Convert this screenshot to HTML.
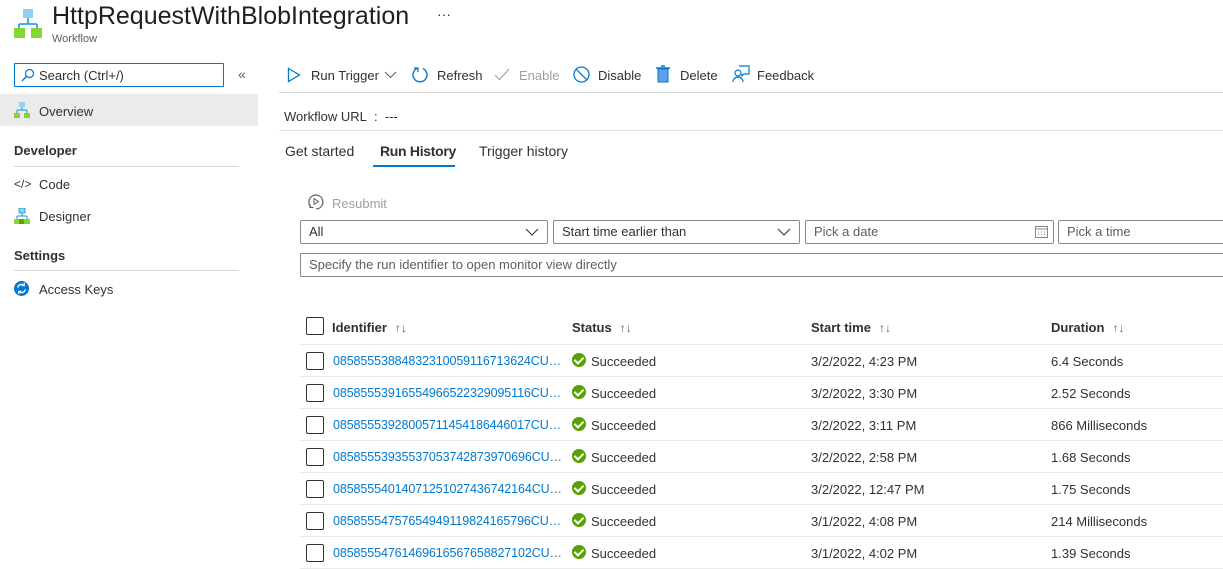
<!DOCTYPE html>
<html><head><meta charset="utf-8"><style>
*{box-sizing:border-box;margin:0;padding:0}
body{width:1223px;height:564px;overflow:hidden;background:#fff;font-family:"Liberation Sans",sans-serif;font-size:13px;color:#323130;position:relative}
.a{position:absolute;white-space:nowrap}
.line{position:absolute;height:1px;background:#d6d6d6}
.box{position:absolute;border:1px solid #8a8886;border-radius:2px;height:24px;line-height:22px;padding-left:8px;color:#323130}
.cb{position:absolute;width:18px;height:18px;border:1px solid #323130;border-radius:2px;left:306px}
.link{color:#0078d4;font-size:12.5px;letter-spacing:-0.1px}
.ok{position:absolute;left:572px;width:14px;height:14px;border-radius:50%;background:#57a300}
.ok:after{content:"";position:absolute;left:4px;top:2px;width:4px;height:7px;border:solid #fff;border-width:0 2px 2px 0;transform:rotate(45deg)}
.hd{font-weight:bold;color:#323130}
.sort{color:#605e5c;font-weight:normal;margin-left:8px;font-size:12px}
</style></head><body>
<svg class="a" style="left:14px;top:9px" width="28" height="30" viewBox="0 0 28 30"><rect x="9" y="0" width="10" height="9" fill="#8fd0f5"/><path d="M14 9v6M5 15h18M5 15v4M23 15v4" stroke="#1490df" stroke-width="1.5" fill="none"/><rect x="0" y="19" width="11" height="10" fill="#86d633"/><rect x="17" y="19" width="11" height="10" fill="#86d633"/></svg>
<div class="a" style="left:52px;top:2px;font-size:25px;color:#201f1e">HttpRequestWithBlobIntegration</div>
<div class="a" style="left:437px;top:6px;font-size:14px">···</div>
<div class="a" style="left:52px;top:33px;font-size:11px;color:#605e5c">Workflow</div>

<div class="a" style="left:14px;top:63px;width:210px;height:24px;border:1px solid #0078d4;border-radius:1px"></div>
<svg class="a" style="left:21px;top:68px" width="14" height="14" viewBox="0 0 14 14"><circle cx="8.5" cy="5.5" r="4" fill="none" stroke="#0078d4" stroke-width="1.2"/><path d="M5.5 8.5L1 13" stroke="#0078d4" stroke-width="1.3"/></svg>
<div class="a" style="left:39px;top:68px;color:#323130">Search (Ctrl+/)</div>
<div class="a" style="left:238px;top:66px;color:#605e5c;font-size:14px">«</div>
<div class="a" style="left:0;top:94px;width:258px;height:32px;background:#edebe9"></div>
<svg class="a" style="left:14px;top:102px" width="16" height="16" viewBox="0 0 16 16"><rect x="5" y="0" width="6" height="5" fill="#8fd0f5"/><path d="M8 5v3M3 8h10M3 8v3M13 8v3" stroke="#1490df" stroke-width="1" fill="none"/><rect x="0" y="11" width="6" height="5" fill="#86d633"/><rect x="10" y="11" width="6" height="5" fill="#86d633"/></svg>
<div class="a" style="left:39px;top:104px">Overview</div>
<div class="a" style="left:14px;top:143px;font-weight:bold">Developer</div>
<div class="line" style="left:14px;top:166px;width:225px"></div>
<div class="a" style="left:14px;top:177px;font-size:12px">&lt;/&gt;</div>
<div class="a" style="left:39px;top:177px">Code</div>
<svg class="a" style="left:14px;top:208px" width="16" height="16" viewBox="0 0 16 16"><rect x="5" y="0" width="6" height="5" fill="#8fd0f5" stroke="#1490df" stroke-width=".8"/><path d="M8 5v3M3 8h10M3 8v3M13 8v3" stroke="#1490df" stroke-width="1" fill="none"/><rect x="0" y="11" width="6" height="5" fill="#86d633"/><rect x="5" y="11" width="6" height="5" fill="#5ea000"/><rect x="10" y="11" width="6" height="5" fill="#86d633"/></svg>
<div class="a" style="left:39px;top:209px">Designer</div>
<div class="a" style="left:14px;top:248px;font-weight:bold">Settings</div>
<div class="line" style="left:14px;top:270px;width:225px"></div>
<svg class="a" style="left:14px;top:281px" width="15" height="15" viewBox="0 0 16 16"><circle cx="8" cy="8" r="8" fill="#0078d4"/><path d="M4 7a4 4 0 0 1 7-2M12 9a4 4 0 0 1-7 2" stroke="#fff" stroke-width="1.5" fill="none"/><path d="M11 2v3h-3M5 14v-3h3" stroke="#fff" stroke-width="1.3" fill="none"/></svg>
<div class="a" style="left:39px;top:282px">Access Keys</div>

<svg class="a" style="left:287px;top:67px" width="14" height="16" viewBox="0 0 14 16"><path d="M1.5 1.5L12.5 8 1.5 14.5Z" fill="none" stroke="#0078d4" stroke-width="1.3"/></svg>
<div class="a" style="left:311px;top:68px">Run Trigger</div>
<svg class="a" style="left:384px;top:71px" width="13" height="8" viewBox="0 0 13 8"><path d="M1 1l5.5 5.5L12 1" stroke="#605e5c" fill="none"/></svg>
<svg class="a" style="left:411px;top:66px" width="18" height="18" viewBox="0 0 18 18"><path d="M6 2.5A7 7 0 1 0 12 2.5" stroke="#0078d4" stroke-width="1.4" fill="none"/><path d="M3 2h4v4" stroke="#0078d4" stroke-width="1.3" fill="none"/></svg>
<div class="a" style="left:437px;top:68px">Refresh</div>
<svg class="a" style="left:494px;top:68px" width="16" height="13" viewBox="0 0 16 13"><path d="M1 7l4.5 4.5L15 1" stroke="#a19f9d" fill="none" stroke-width="1.1"/></svg>
<div class="a" style="left:519px;top:68px;color:#a19f9d">Enable</div>
<svg class="a" style="left:573px;top:66px" width="17" height="17" viewBox="0 0 17 17"><circle cx="8.5" cy="8.5" r="7.5" stroke="#0078d4" stroke-width="1.3" fill="none"/><path d="M3.3 3.3l10.4 10.4" stroke="#0078d4" stroke-width="1.3"/></svg>
<div class="a" style="left:598px;top:68px">Disable</div>
<svg class="a" style="left:656px;top:65px" width="14" height="18" viewBox="0 0 14 18"><path d="M0 3h14M5 1h4" stroke="#0078d4" stroke-width="1.4"/><rect x="2" y="4" width="10" height="13" fill="#5ea0ef" stroke="#0078d4"/></svg>
<div class="a" style="left:680px;top:68px">Delete</div>
<svg class="a" style="left:732px;top:65px" width="18" height="18" viewBox="0 0 18 18"><circle cx="6" cy="8" r="3" stroke="#0078d4" fill="none" stroke-width="1.2"/><path d="M1 17a5 5 0 0 1 10 0" stroke="#0078d4" fill="none" stroke-width="1.2"/><path d="M7 1h10v8h-5l-2 2v-2" stroke="#0078d4" fill="none" stroke-width="1.2"/></svg>
<div class="a" style="left:757px;top:68px">Feedback</div>
<div class="line" style="left:279px;top:92px;width:944px"></div>
<div class="a" style="left:284px;top:109px">Workflow URL&nbsp; :&nbsp; ---</div>
<div class="line" style="left:279px;top:130px;width:944px;background:#e1dfdd"></div>
<div class="a" style="left:285px;top:143px;font-size:14px">Get started</div>
<div class="a" style="left:380px;top:143px;font-size:14px;font-weight:bold;color:#323130;letter-spacing:-0.3px">Run History</div>
<div class="a" style="left:373px;top:165px;width:82px;height:2px;background:#0078d4"></div>
<div class="a" style="left:479px;top:143px;font-size:14px">Trigger history</div>

<svg class="a" style="left:307px;top:193px" width="18" height="18" viewBox="0 0 18 18"><path d="M4 14A7 7 0 1 1 9 16" stroke="#605e5c" fill="none" stroke-width="1.2"/><path d="M7 5.5v6l4.5-3z" fill="none" stroke="#605e5c"/><path d="M3 11v3.5h3.5" stroke="#605e5c" fill="none"/></svg>
<div class="a" style="left:332px;top:196px;color:#a19f9d">Resubmit</div>

<div class="box" style="left:300px;top:220px;width:248px">All</div>
<svg class="a" style="left:525px;top:228px" width="14" height="8" viewBox="0 0 14 8"><path d="M1 1l6 6 6-6" stroke="#323130" fill="none"/></svg>
<div class="box" style="left:553px;top:220px;width:247px">Start time earlier than</div>
<svg class="a" style="left:777px;top:228px" width="14" height="8" viewBox="0 0 14 8"><path d="M1 1l6 6 6-6" stroke="#323130" fill="none"/></svg>
<div class="box" style="left:805px;top:220px;width:249px;color:#605e5c">Pick a date</div>
<svg class="a" style="left:1035px;top:226px" width="13" height="12" viewBox="0 0 13 12"><rect x=".5" y=".5" width="12" height="11" fill="none" stroke="#8a8886"/><path d="M0 3h13" stroke="#8a8886"/><path d="M3 6h1M6 6h1M9 6h1M3 8.5h1M6 8.5h1M9 8.5h1" stroke="#8a8886"/></svg>
<div class="box" style="left:1058px;top:220px;width:175px;color:#605e5c">Pick a time</div>
<div class="box" style="left:300px;top:253px;width:933px;color:#605e5c">Specify the run identifier to open monitor view directly</div>

<div class="cb" style="top:317px"></div>
<div class="a hd" style="left:332px;top:320px">Identifier<span class="sort">↑↓</span></div>
<div class="a hd" style="left:572px;top:320px">Status<span class="sort">↑↓</span></div>
<div class="a hd" style="left:811px;top:320px">Start time<span class="sort">↑↓</span></div>
<div class="a hd" style="left:1051px;top:320px">Duration<span class="sort">↑↓</span></div>
<div class="line" style="left:300px;top:344px;width:923px;background:#edebe9"></div>

<div id="rows"></div>
<script>
var d=[["08585553884832310059116713624CU…","3/2/2022, 4:23 PM","6.4 Seconds"],
["08585553916554966522329095116CU…","3/2/2022, 3:30 PM","2.52 Seconds"],
["08585553928005711454186446017CU…","3/2/2022, 3:11 PM","866 Milliseconds"],
["08585553935537053742873970696CU…","3/2/2022, 2:58 PM","1.68 Seconds"],
["08585554014071251027436742164CU…","3/2/2022, 12:47 PM","1.75 Seconds"],
["08585554757654949119824165796CU…","3/1/2022, 4:08 PM","214 Milliseconds"],
["08585554761469616567658827102CU…","3/1/2022, 4:02 PM","1.39 Seconds"]];
var h="";d.forEach(function(r,i){var y=354+i*32;
h+='<div class="cb" style="top:'+(y-2)+'px"></div><div class="a link" style="left:333px;top:'+y+'px">'+r[0]+'</div><div class="ok" style="top:'+(y-1)+'px"></div><div class="a" style="left:591px;top:'+y+'px">Succeeded</div><div class="a" style="left:811px;top:'+y+'px">'+r[1]+'</div><div class="a" style="left:1051px;top:'+y+'px">'+r[2]+'</div><div class="line" style="left:300px;top:'+(y+22)+'px;width:923px;background:#edebe9"></div>';});
document.getElementById("rows").innerHTML=h;
</script>
</body></html>
